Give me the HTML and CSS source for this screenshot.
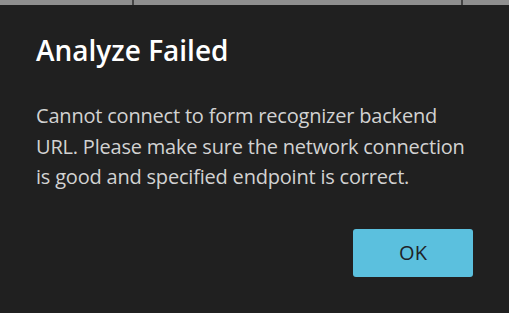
FILE: index.html
```html
<!DOCTYPE html>
<html>
<head>
<meta charset="utf-8">
<link rel="stylesheet" href="styles.css">
</head>
<body>
<div class="topbar">
  <div class="seg seg-a"></div>
  <div class="seg seg-b"></div>
  <div class="seg seg-c"></div>
</div>
<div class="dialog">
  <h1 class="title">Analyze Failed</h1>
  <p class="message">Cannot connect to form recognizer backend URL. Please make sure the network connection is good and specified endpoint is correct.</p>
  <div class="footer">
    <button class="ok">OK</button>
  </div>
</div>
</body>
</html>
```
FILE: styles.css
```css
html, body {
  margin: 0;
  padding: 0;
  background: #202020;
  width: 509px;
  height: 313px;
  overflow: hidden;
  font-family: "Open Sans", "Noto Sans", sans-serif;
}
.topbar {
  display: flex;
  gap: 2px;
  height: 5px;
  background: #454545;
}
.seg { background: #8f8f8f; }
.seg-a { width: 132px; }
.seg-b { width: 327px; }
.seg-c { flex: 1; }
.dialog {
  display: flex;
  flex-direction: column;
  padding: 24px 36px 37px 36px;
}
.title {
  margin: 0;
  font-size: 28px;
  font-weight: 600;
  line-height: 42px;
  color: #ffffff;
}
.message {
  margin: 30px 0 0 0;
  font-size: 20px;
  line-height: 30.5px;
  letter-spacing: -0.2px;
  color: #d2d2d2;
}
.footer {
  display: flex;
  justify-content: flex-end;
  margin-top: 36px;
}
.ok {
  width: 120px;
  height: 48px;
  border: none;
  border-radius: 3px;
  background: #5bc0de;
  color: #1f2328;
  font-family: "Open Sans", "Noto Sans", sans-serif;
  font-size: 20px;
  padding: 0;
}
```
